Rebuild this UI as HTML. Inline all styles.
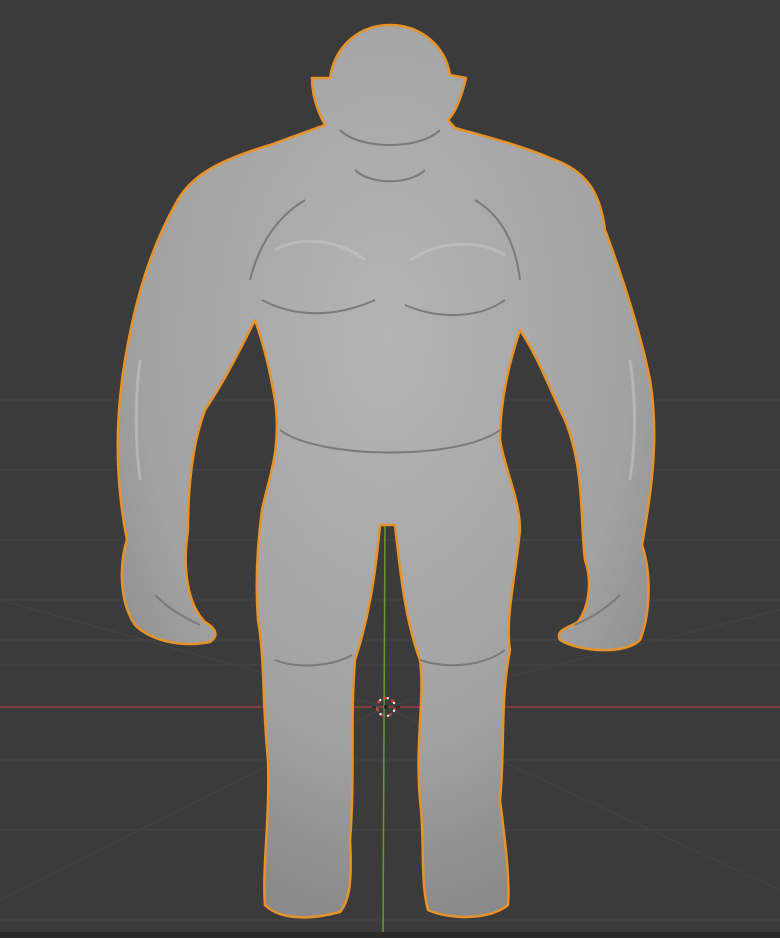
<!DOCTYPE html>
<html><head><meta charset="utf-8"><style>
html,body{margin:0;padding:0;background:#3b3b3b;width:780px;height:938px;overflow:hidden}
svg{display:block}
</style></head><body>
<svg width="780" height="938" viewBox="0 0 780 938" xmlns="http://www.w3.org/2000/svg">
<defs>
<radialGradient id="g" cx="50%" cy="35%" r="65%">
<stop offset="0" stop-color="#b4b4b4"/><stop offset="0.7" stop-color="#a2a2a2"/><stop offset="1" stop-color="#8a8a8a"/>
</radialGradient>
</defs>
<rect width="780" height="938" fill="#3b3b3b"/>
<g stroke="#444" stroke-width="1" fill="none">
<line x1="0" y1="540" x2="780" y2="540"/><line x1="0" y1="600" x2="780" y2="600"/>
<line x1="0" y1="640" x2="780" y2="640"/><line x1="0" y1="665" x2="780" y2="665"/>
<line x1="0" y1="760" x2="780" y2="760"/><line x1="0" y1="830" x2="780" y2="830"/>
<line x1="0" y1="920" x2="780" y2="920"/><line x1="0" y1="400" x2="780" y2="400"/>
<line x1="0" y1="470" x2="780" y2="470"/>
<line x1="385" y1="707" x2="0" y2="900"/><line x1="385" y1="707" x2="780" y2="890"/>
<line x1="385" y1="707" x2="0" y2="600"/><line x1="385" y1="707" x2="780" y2="610"/>
</g>
<line x1="0" y1="707" x2="780" y2="707" stroke="#9a3a48" stroke-width="1.5"/>
<line x1="385" y1="520" x2="383" y2="938" stroke="#6a9a2a" stroke-width="1.5"/>
<path fill="url(#g)" stroke="#e8922a" stroke-width="2.5" stroke-linejoin="round" d="
M390 25 C420 25 445 45 450 75 L466 78 C462 95 456 112 448 120 L455 128 C480 135 520 145 550 158 C585 170 600 190 605 230
C620 270 640 330 650 380 C660 440 650 500 642 545 C652 575 650 615 640 640 C625 655 580 652 560 640 C555 630 568 628 578 622
C590 605 592 580 585 560 C580 520 585 470 565 420 C552 395 540 360 520 330 C510 360 500 400 500 440 C505 470 520 500 520 530
C515 580 505 620 510 650 C500 700 505 750 500 800 C505 840 510 880 508 905 C490 920 450 920 428 910 C420 880 425 840 420 800
C415 740 425 700 420 660 C405 620 400 570 395 525 L380 525 C375 580 368 620 355 660 C350 720 355 780 350 840 C352 880 350 900 340 912
C310 920 280 920 265 905 C262 870 270 820 268 760 C262 700 265 660 258 620 C255 580 258 540 262 510 C268 480 282 450 275 400 C268 360 262 340 255 320
C240 350 225 380 205 410 C190 450 188 500 188 530 C182 570 188 605 205 622 C215 628 220 635 210 642 C180 648 150 640 135 625 C118 600 120 560 127 540
C115 480 115 420 125 360 C135 300 150 250 175 205 C190 175 220 160 270 145 L325 125 C318 112 312 95 312 78 L330 78 C335 45 360 25 390 25 Z"/>
<g fill="none" stroke="#7a7a7a" stroke-width="2">
<path d="M262 300 C290 315 330 320 375 300"/>
<path d="M405 305 C440 320 480 318 505 300"/>
<path d="M340 130 C360 150 420 150 440 130"/>
<path d="M355 170 C370 185 410 185 425 170"/>
<path d="M305 200 C280 215 260 240 250 280"/>
<path d="M475 200 C500 215 515 240 520 280"/>
<path d="M280 430 C320 460 460 460 500 430"/>
<path d="M275 660 C300 670 335 665 352 655"/>
<path d="M420 660 C450 670 485 665 505 650"/>
<path d="M155 595 C170 610 185 618 200 625"/>
<path d="M620 595 C605 610 590 618 575 625"/>
</g>
<g fill="none" stroke="#c4c4c4" stroke-width="3" opacity="0.6">
<path d="M275 250 C300 235 340 240 365 260"/>
<path d="M410 260 C440 240 480 240 505 255"/>
<path d="M140 360 C135 400 135 440 140 480"/>
<path d="M630 360 C636 400 636 440 630 480"/>
</g>
<circle cx="386" cy="707" r="9" fill="none" stroke="#fff" stroke-width="2" stroke-dasharray="5 3"/>
<circle cx="386" cy="707" r="9" fill="none" stroke="#d33" stroke-width="2" stroke-dasharray="3 5"/>
<circle cx="386" cy="707" r="2" fill="#222"/>
<line x1="372" y1="707" x2="378" y2="707" stroke="#222" stroke-width="1.5"/>
<line x1="394" y1="707" x2="400" y2="707" stroke="#222" stroke-width="1.5"/>
<rect x="0" y="932" width="780" height="6" fill="#2a2a2a"/>
</svg>
</body></html>
